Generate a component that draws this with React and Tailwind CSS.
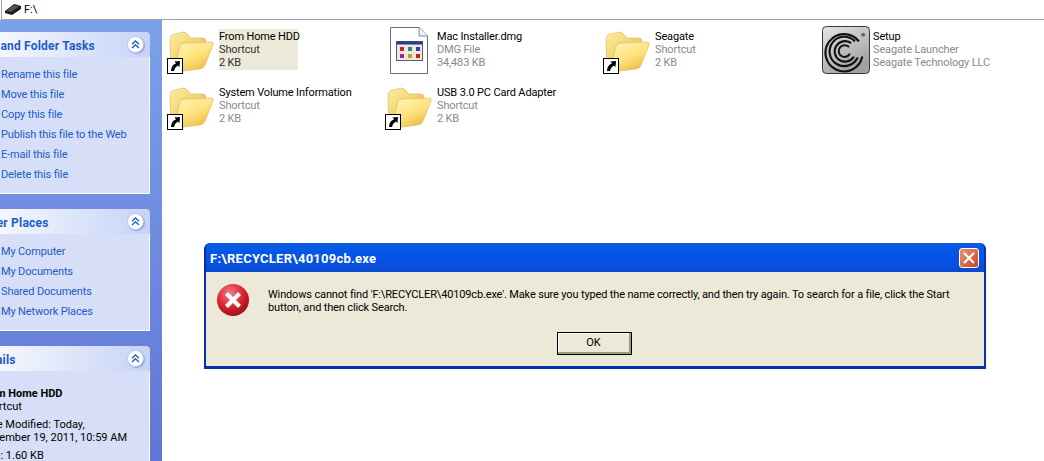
import React from 'react';

const font = { fontFamily: 'Roboto, Tahoma, sans-serif' };

function FolderIcon() {
  return (
    <svg width="52" height="50" viewBox="0 0 52 50" className="absolute left-[-1px] top-0">
      <defs>
        <linearGradient id="folderBack" x1="0" y1="0" x2="1" y2="1">
          <stop offset="0" stopColor="#fdeea0" />
          <stop offset="1" stopColor="#e6b840" />
        </linearGradient>
        <linearGradient id="folderFront" x1="0" y1="0" x2="0.6" y2="1">
          <stop offset="0" stopColor="#fff6c0" />
          <stop offset="0.6" stopColor="#fee27a" />
          <stop offset="1" stopColor="#ecbc48" />
        </linearGradient>
      </defs>
      <path d="M3 12 Q3 6 8 6 L16 4 Q20 4 22 8 L24 10 L36 10 Q39 10 39 14 L39 18 L16 18 L10 38 L5 40 Q3 30 3 12 Z" fill="url(#folderBack)" stroke="#d8b060" strokeWidth="0.6" />
      <path d="M13 18 Q14 15 18 15 L44 14 Q47 14 46 17 L38 37 Q37 40 33 41 L9 44 Q6 44 7 40 Z" fill="url(#folderFront)" stroke="#dcb45c" strokeWidth="0.6" />
      <rect x="0.5" y="30.5" width="15" height="15" fill="#fff" stroke="#000" />
      <path d="M4 43 Q4 37 9 35.5 L7.5 33.5 L13 33 L12.5 39 L10.8 37.5 Q8 39 7 43 Z" fill="#000" />
    </svg>
  );
}

function FileIcon() {
  return (
    <svg width="38" height="47" viewBox="0 0 38 47" className="absolute left-[4px] top-[-1px]">
      <path d="M0.5 0.5 H29 L37.5 9 V46.5 H0.5 Z" fill="#fff" stroke="#6e6e6e" />
      <path d="M29 0.5 V9 H37.5" fill="#eef" stroke="#8a8a8a" />
      <rect x="6.5" y="14.5" width="26" height="19" fill="#ece9d8" stroke="#555a7e" />
      <rect x="6.5" y="14.5" width="26" height="3" fill="#2b3a8e" />
      <rect x="10" y="20" width="4" height="4" fill="#c8203a" />
      <rect x="18" y="20" width="4" height="4" fill="#1b8a9a" />
      <rect x="26" y="20" width="4" height="4" fill="#2a3fb0" />
      <rect x="10" y="27" width="4" height="4" fill="#a020a8" />
      <rect x="18" y="27" width="4" height="4" fill="#c8a020" />
      <rect x="26" y="27" width="4" height="4" fill="#c02020" />
    </svg>
  );
}

function SeagateIcon() {
  return (
    <svg width="48" height="48" viewBox="0 0 49 49" className="absolute left-0 top-[-2px]">
      <defs>
        <linearGradient id="seagateBg" x1="0" y1="0" x2="0.6" y2="1">
          <stop offset="0" stopColor="#e6e6e6" />
          <stop offset="1" stopColor="#a0a0a0" />
        </linearGradient>
      </defs>
      <rect x="0.5" y="0.5" width="48" height="48" rx="4" fill="url(#seagateBg)" stroke="#333" />
      <g fill="none" stroke="#111" strokeLinecap="round">
        <path d="M37 15 A19 19 0 1 0 41 32" strokeWidth="2.2" />
        <path d="M33 15 A15 15 0 1 0 36 33" strokeWidth="2.2" />
        <path d="M29 17 A10.5 10.5 0 1 0 32 32" strokeWidth="2.2" />
        <path d="M27 21 A6 6 0 1 0 28 29" strokeWidth="2" />
      </g>
      <circle cx="42" cy="9" r="2" fill="#666" />
    </svg>
  );
}

const files = [
  { icon: 'folder', name: 'From Home HDD', type: 'Shortcut', size: '2 KB', selected: true },
  { icon: 'file', name: 'Mac Installer.dmg', type: 'DMG File', size: '34,483 KB' },
  { icon: 'folder', name: 'Seagate', type: 'Shortcut', size: '2 KB' },
  { icon: 'seagate', name: 'Setup', type: 'Seagate Launcher', size: 'Seagate Technology LLC' },
  { icon: 'folder', name: 'System Volume Information', type: 'Shortcut', size: '2 KB' },
  { icon: 'folder', name: 'USB 3.0 PC Card Adapter', type: 'Shortcut', size: '2 KB' },
];

function FileItem({ file }) {
  return (
    <div className="relative h-[56px] pl-[51px] pt-[1px]">
      {file.icon === 'folder' && <FolderIcon />}
      {file.icon === 'file' && <FileIcon />}
      {file.icon === 'seagate' && <SeagateIcon />}
      <div className={`inline-block text-[11px] leading-[13px] tracking-[-0.15px] py-[1px] ${file.selected ? 'bg-[#ece9d8] w-[79px]' : ''}`}>
        <div className="text-black whitespace-nowrap">{file.name}</div>
        <div className={`whitespace-nowrap ${file.selected ? 'text-[#333]' : 'text-[#8a8a8a]'}`}>{file.type}</div>
        <div className={`whitespace-nowrap ${file.selected ? 'text-[#333]' : 'text-[#8a8a8a]'}`}>{file.size}</div>
      </div>
    </div>
  );
}

function Panel({ title, children }) {
  return (
    <section className="w-[182px] -ml-[32px] mb-[15px]">
      <div className="h-[25px] rounded-tr-[4px] bg-gradient-to-r from-white to-[#c6d3f7] flex items-center justify-between pl-[9px] pr-[6px]">
        <span className="text-[12px] font-bold tracking-[0.2px] text-[#215dc6] whitespace-nowrap pt-[3px]">{title}</span>
        <span className="w-[17px] h-[17px] rounded-full bg-white border border-[#b9c6ea] shadow-[1px_1px_1px_#8fa2d8] flex items-center justify-center">
          <svg width="9" height="9" viewBox="0 0 9 9" fill="none" stroke="#215dc6" strokeWidth="1.4">
            <path d="M1 4.2 L4.5 1 L8 4.2" />
            <path d="M1 8 L4.5 4.8 L8 8" />
          </svg>
        </span>
      </div>
      <div className="bg-[#d6dff7] border border-t-0 border-white">{children}</div>
    </section>
  );
}

function TaskList({ items }) {
  return (
    <ul className="pt-[8px] pb-[8px] pl-[32px]">
      {items.map((item) => (
        <li key={item} className="h-[20px] leading-[20px] text-[11px] tracking-[-0.15px] text-[#215dc6] whitespace-nowrap">
          {item}
        </li>
      ))}
    </ul>
  );
}

export default function App() {
  return (
    <div className="relative w-[1044px] h-[461px] overflow-hidden bg-white" style={font}>
      {/* address bar */}
      <div className="h-[20px] ml-[1px] pl-[3px] border-l border-b border-[#98a4a8] flex items-center gap-[3px]">
        <svg width="16" height="13" viewBox="0 0 16 13">
          <path d="M0 8 L9 1 L16 3 L16 6 L7 12 L0 10 Z" fill="#1c1c1c" />
          <path d="M1 8 L9 2 L14 3.5 L6 9 Z" fill="#555" />
        </svg>
        <span className="text-[11px] text-black leading-none">F:\</span>
      </div>

      <div className="flex h-[441px]">
        <aside className="w-[162px] shrink-0 overflow-hidden pt-[12px] bg-gradient-to-b from-[#7ba2e7] to-[#6375d6]">
          <Panel title="File and Folder Tasks">
            <TaskList items={['Rename this file', 'Move this file', 'Copy this file', 'Publish this file to the Web', 'E-mail this file', 'Delete this file']} />
          </Panel>
          <Panel title="Other Places">
            <TaskList items={['My Computer', 'My Documents', 'Shared Documents', 'My Network Places']} />
          </Panel>
          <Panel title="Details">
            <div className="pl-[11px] pt-[16px] pb-[8px] text-[11px] leading-[13px] text-black">
              <div className="font-bold whitespace-nowrap">From Home HDD</div>
              <div className="whitespace-nowrap">Shortcut</div>
              <div className="mt-[5px] whitespace-nowrap">Date Modified: Today,</div>
              <div className="whitespace-nowrap">November 19, 2011, 10:59 AM</div>
              <div className="mt-[5px] whitespace-nowrap">Size: 1.60 KB</div>
            </div>
          </Panel>
        </aside>

        <main className="flex-1 grid grid-cols-[218px_218px_218px_218px] content-start pl-[6px] pt-[8px]">
          {files.map((file) => (
            <FileItem key={file.name} file={file} />
          ))}
        </main>
      </div>

      {/* error dialog */}
      <div className="absolute left-[204px] top-[243px] w-[782px] h-[126px] rounded-t-[6px] bg-[#0a4fd8] border-x-[2px] border-b-[3px] border-[#0831a8] flex flex-col">
        <div className="h-[29px] shrink-0 rounded-t-[5px] bg-gradient-to-b from-[#0a5ce0] via-[#0453e8] to-[#0a4bd0] flex items-center justify-between pl-[4px] pr-[5px]">
          <span className="text-[13px] font-bold text-white whitespace-nowrap tracking-[0.25px] pt-[3px]">F:\RECYCLER\40109cb.exe</span>
          <span className="w-[20px] h-[20px] rounded-[3px] border border-white bg-gradient-to-br from-[#eb9478] to-[#c9401e] flex items-center justify-center">
            <svg width="12" height="12" viewBox="0 0 12 12" stroke="#fff" strokeWidth="2.2">
              <path d="M1 1 L11 11 M11 1 L1 11" />
            </svg>
          </span>
        </div>
        <div className="relative flex-1 bg-[#ece9d8] pl-[62px] pt-[16px]">
          <svg width="34" height="34" viewBox="0 0 34 34" className="absolute left-[10px] top-[11px]">
            <defs>
              <radialGradient id="errorBg" cx="0.4" cy="0.3" r="0.8">
                <stop offset="0" stopColor="#f0808a" />
                <stop offset="0.55" stopColor="#d8202c" />
                <stop offset="1" stopColor="#8a0c12" />
              </radialGradient>
            </defs>
            <circle cx="17" cy="17" r="16" fill="url(#errorBg)" />
            <path d="M10.5 10.5 L23.5 23.5 M23.5 10.5 L10.5 23.5" stroke="#fff" strokeWidth="4.2" />
          </svg>
          <p className="text-[11px] tracking-[-0.15px] leading-[13px] text-black w-[712px]">
            Windows cannot find 'F:\RECYCLER\40109cb.exe'. Make sure you typed the name correctly, and then try again. To search for a file, click the Start<br />button, and then click Search.
          </p>
          <button
            type="button"
            className="absolute left-[351px] top-[60px] w-[75px] h-[23px] pr-[2px] border border-black bg-[#ece9d8] shadow-[inset_-2px_-2px_0_#9d9a89,inset_1px_1px_0_#fff] text-[11px] text-black"
          >
            OK
          </button>
        </div>
      </div>
    </div>
  );
}
